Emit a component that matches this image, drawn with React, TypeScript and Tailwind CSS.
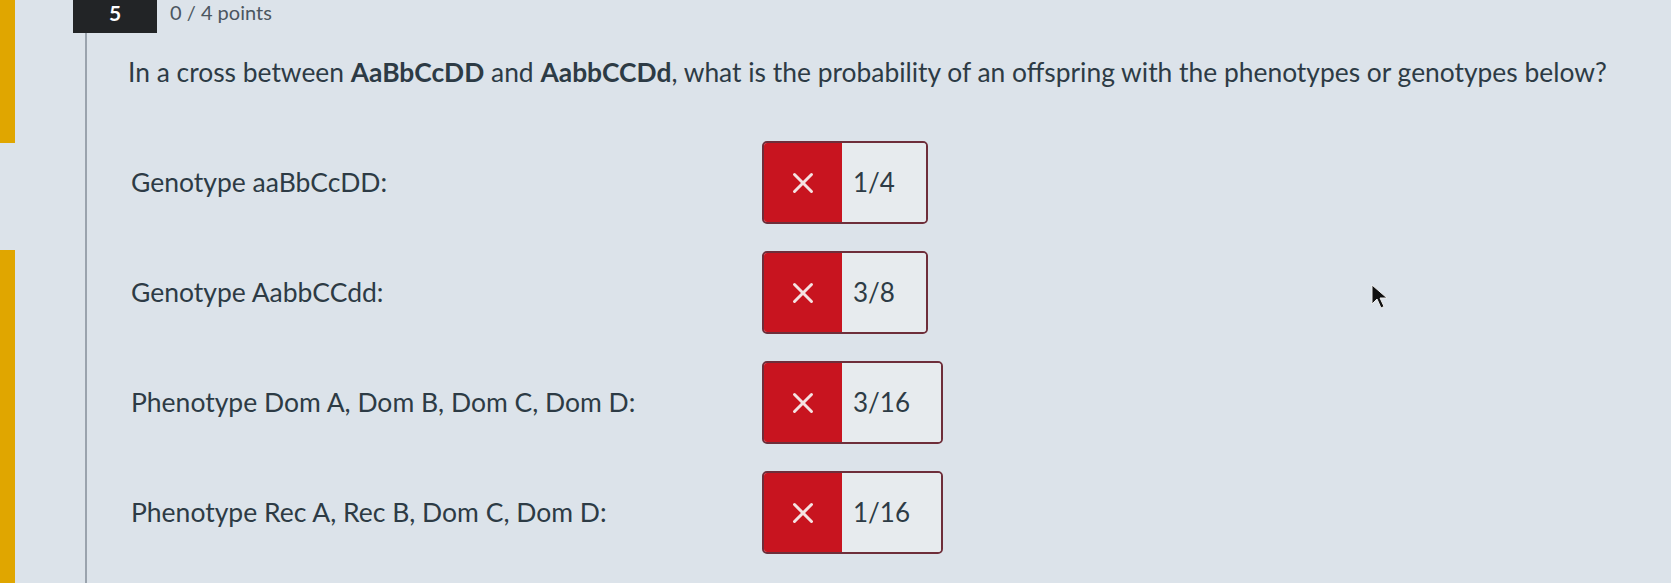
import { X } from 'lucide-react';

const rows = [
  { label: 'Genotype aaBbCcDD:', answer: '1/4', wide: false },
  { label: 'Genotype AabbCCdd:', answer: '3/8', wide: false },
  { label: 'Phenotype Dom A, Dom B, Dom C, Dom D:', answer: '3/16', wide: true },
  { label: 'Phenotype Rec A, Rec B, Dom C, Dom D:', answer: '1/16', wide: true },
];

function AnswerBox({ answer, wide }: { answer: string; wide: boolean }) {
  return (
    <div
      className={`flex h-[83px] overflow-hidden rounded-[5px] border-2 border-[#6e2e3a] ${
        wide ? 'w-[181px]' : 'w-[166px]'
      }`}
    >
      <div className="flex w-[78px] items-center justify-center bg-[#c8141f]">
        <X className="h-[34px] w-[34px] text-[#f5e2e2]" strokeWidth={2.1} />
      </div>
      <div className="flex flex-1 items-center bg-[#e7ebee] pl-[11px] text-[26px] text-[#2d3b45]">
        {answer}
      </div>
    </div>
  );
}

export default function App() {
  return (
    <div
      className="relative flex h-[583px] w-full overflow-hidden bg-[#dce3ea] text-[#2d3b45]"
      style={{ fontFamily: 'Lato, "Open Sans", sans-serif' }}
    >
      <div className="flex w-[15px] shrink-0 flex-col">
        <div className="h-[143px] bg-[#e0a600]" />
        <div className="h-[107px]" />
        <div className="flex-1 bg-[#e0a600]" />
      </div>

      <div className="ml-[58px] flex flex-1 flex-col">
        <div className="flex items-start">
          <div className="flex h-[33px] w-[84px] justify-center bg-[#222426] text-[21px] leading-[26px] font-bold text-white">
            5
          </div>
          <div className="ml-[13px] text-[20px] leading-[24px] text-[#4b5660]">0 / 4 points</div>
        </div>

        <div className="ml-[12px] flex-1 border-l-2 border-[#9aa3ad] pl-[41px]">
          <p className="mt-[22px] text-[26.4px] leading-[34px]">
            In a cross between <b className="font-bold">AaBbCcDD</b> and{' '}
            <b className="font-bold">AabbCCDd</b>, what is the probability of an offspring with the
            phenotypes or genotypes below?
          </p>

          <div className="mt-[52px] flex flex-col gap-[27px] pl-[3px]">
            {rows.map((r) => (
              <div key={r.label} className="flex items-center">
                <div className="w-[631px] shrink-0 text-[26.5px]">{r.label}</div>
                <AnswerBox answer={r.answer} wide={r.wide} />
              </div>
            ))}
          </div>
        </div>
      </div>

      <svg
        className="absolute left-[1371px] top-[284px]"
        width="18"
        height="26"
        viewBox="0 0 18 26"
      >
        <path d="M1 1 L1 20 L6 15 L10 24 L13 22.5 L9 14 L16 14 Z" fill="#111" stroke="#eee" strokeWidth="1" />
      </svg>
    </div>
  );
}
